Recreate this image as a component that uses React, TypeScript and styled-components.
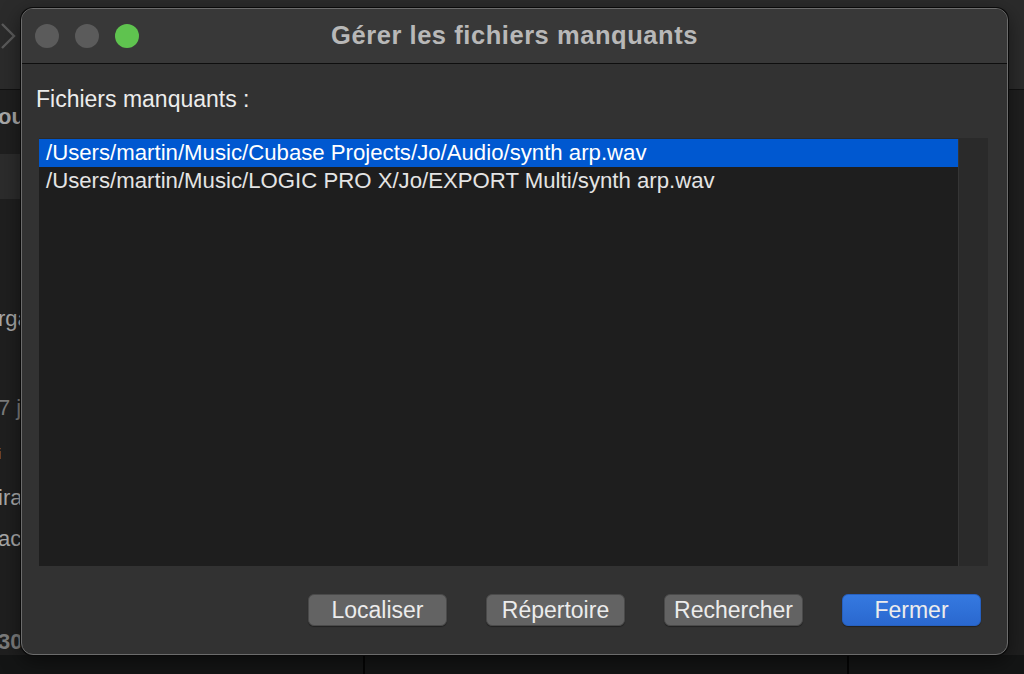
import React from 'react';
import styled, { createGlobalStyle } from 'styled-components';

const files = [
  '/Users/martin/Music/Cubase Projects/Jo/Audio/synth arp.wav',
  '/Users/martin/Music/LOGIC PRO X/Jo/EXPORT Multi/synth arp.wav',
];

const buttons = ['Localiser', 'Répertoire', 'Rechercher', 'Fermer'];

function App() {
  return (
    <>
      <GlobalStyle />
      <Desktop>
        <AppHeader>
          <Chevron viewBox="0 0 16 28">
            <path d="M2 2 L14 14 L2 26" fill="none" stroke="#5a5a5a" strokeWidth="2.4" />
          </Chevron>
        </AppHeader>
        <AppBody>
          <Sidebar>
            <SideLabel $top={14} $bold>ou</SideLabel>
            <SideBox />
            <SideLabel $top={107}>rga</SideLabel>
            <SideLabel $top={63} $dim>7 j</SideLabel>
            <SideLabel $top={20} $small>i</SideLabel>
            <SideLabel $top={18}>ira</SideLabel>
            <SideLabel $top={15}>ac</SideLabel>
            <SideLabel $top={77} $bold $dim>30</SideLabel>
          </Sidebar>
        </AppBody>
        <BottomPanel>
          <BottomCell $w={365} />
          <BottomCell $w={484} />
          <BottomCell $w={175} $last />
        </BottomPanel>

        <Window>
          <TitleBar>
            <Lights>
              <Light $color="#5b5b5b" />
              <Light $color="#5b5b5b" />
              <Light $color="#5fc34f" />
            </Lights>
            <Title>Gérer les fichiers manquants</Title>
          </TitleBar>
          <Content>
            <Label>Fichiers manquants :</Label>
            <ListBox>
              <Rows>
                {files.map((f, i) => (
                  <Row key={f} $selected={i === 0}>
                    {f}
                  </Row>
                ))}
              </Rows>
              <Gutter />
            </ListBox>
            <ButtonRow>
              {buttons.map((b) => (
                <Button key={b} $primary={b === 'Fermer'}>
                  {b}
                </Button>
              ))}
            </ButtonRow>
          </Content>
        </Window>
      </Desktop>
    </>
  );
}

const GlobalStyle = createGlobalStyle`
  html, body {
    margin: 0;
    padding: 0;
    background: #1c1c1c;
    font-family: 'Liberation Sans', Arial, Helvetica, sans-serif;
  }
  * { box-sizing: border-box; }
`;

const Desktop = styled.div`
  position: relative;
  width: 1024px;
  height: 674px;
  overflow: hidden;
  display: flex;
  flex-direction: column;
  background: #1f1f1f;
`;

const AppHeader = styled.div`
  height: 90px;
  flex-shrink: 0;
  background: #2b2b2b;
  border-bottom: 1px solid #111;
  padding: 22px 0 0 0;
`;

const Chevron = styled.svg`
  width: 16px;
  height: 28px;
  display: block;
`;

const AppBody = styled.div`
  flex: 1;
  display: flex;
`;

const Sidebar = styled.div`
  width: 120px;
  display: flex;
  flex-direction: column;
`;

const SideLabel = styled.div<{ $top: number; $bold?: boolean; $dim?: boolean; $small?: boolean }>`
  margin-top: ${(p) => p.$top}px;
  margin-left: -2px;
  font-size: ${(p) => (p.$small ? 14 : 22)}px;
  line-height: 26px;
  font-weight: ${(p) => (p.$bold ? 700 : 400)};
  color: ${(p) => (p.$dim ? '#7c7c7c' : '#a8a8a8')};
  white-space: nowrap;
`;

const SideBox = styled.div`
  margin-top: 24px;
  height: 45px;
  background: #2c2c2c;
`;

const BottomPanel = styled.div`
  height: 20px;
  flex-shrink: 0;
  display: flex;
  background: #141515;
`;

const BottomCell = styled.div<{ $w: number; $last?: boolean }>`
  width: ${(p) => p.$w}px;
  border-right: ${(p) => (p.$last ? 'none' : '2px solid #050505')};
`;

const Window = styled.div`
  position: absolute;
  left: 21px;
  top: 8px;
  width: 987px;
  height: 647px;
  border-radius: 12px;
  background: #323232;
  border: 1px solid #6c6c6c;
  box-shadow: 0 0 0 1px #0a0a0a, 0 6px 20px rgba(0, 0, 0, 0.5);
  display: flex;
  flex-direction: column;
  overflow: hidden;
`;

const TitleBar = styled.div`
  position: relative;
  height: 55px;
  flex-shrink: 0;
  background: #383838;
  border-bottom: 1px solid #0e0e0e;
  display: flex;
  align-items: center;
  justify-content: center;
`;

const Lights = styled.div`
  position: absolute;
  left: 13px;
  top: 15px;
  display: flex;
  gap: 16px;
`;

const Light = styled.div<{ $color: string }>`
  width: 24px;
  height: 24px;
  border-radius: 50%;
  background: ${(p) => p.$color};
`;

const Title = styled.div`
  font-size: 25.5px;
  font-weight: 700;
  letter-spacing: 0.55px;
  color: #b8b8b8;
  margin-top: -1px;
`;

const Content = styled.div`
  flex: 1;
  display: flex;
  flex-direction: column;
  padding: 22px 19px 0 14px;
`;

const Label = styled.div`
  font-size: 23px;
  color: #ececec;
  line-height: 26px;
`;

const ListBox = styled.div`
  margin: 26px 0 0 3px;
  height: 428px;
  display: flex;
  background: #1e1e1e;
  border-top: 1px solid #2a2a2a;
`;

const Rows = styled.div`
  flex: 1;
  display: flex;
  flex-direction: column;
  border-right: 1px solid #353535;
`;

const Row = styled.div<{ $selected?: boolean }>`
  height: 28px;
  padding-left: 7px;
  font-size: 22.2px;
  line-height: 28px;
  white-space: nowrap;
  background: ${(p) => (p.$selected ? '#0058d0' : 'transparent')};
  color: ${(p) => (p.$selected ? '#ffffff' : '#e4e4e4')};
`;

const Gutter = styled.div`
  width: 29px;
  background: #2a2a2a;
`;

const ButtonRow = styled.div`
  display: flex;
  justify-content: flex-end;
  gap: 39px;
  margin-top: 28px;
  padding-right: 7px;
`;

const Button = styled.div<{ $primary?: boolean }>`
  width: 139px;
  height: 32px;
  border-radius: 6px;
  display: flex;
  align-items: center;
  justify-content: center;
  font-size: 23px;
  color: #ececec;
  background: ${(p) => (p.$primary ? 'linear-gradient(#3579e0, #2a68cf)' : '#636363')};
  border: 1px solid ${(p) => (p.$primary ? '#2660c0' : '#4a4a4a')};
  box-shadow: 0 1px 1px rgba(0, 0, 0, 0.35);
`;

export default App;
